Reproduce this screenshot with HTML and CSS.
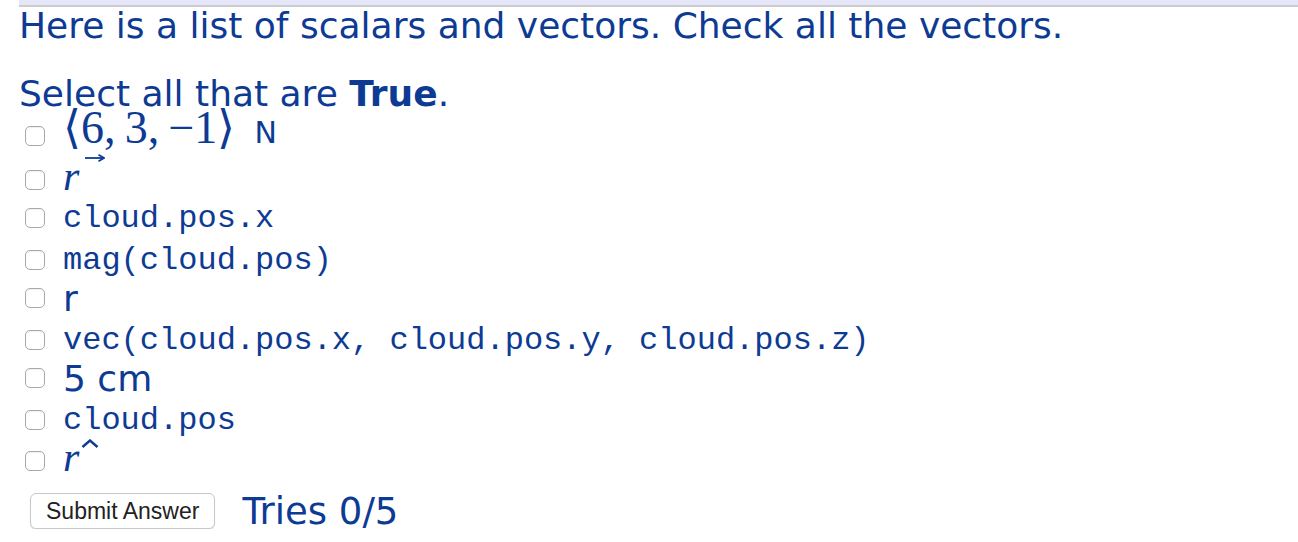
FILE: index.html
```html
<!DOCTYPE html>
<html>
<head>
<meta charset="utf-8">
<link rel="stylesheet" href="styles.css">
</head>
<body>
<div class="topbar"></div>
<div class="content">
  <p class="question">Here is a list of scalars and vectors. Check all the vectors.</p>
  <p class="instr">Select all that are <b>True</b>.</p>
  <ul class="choices">
    <li class="row r-math"><span class="box"></span><span class="label lift-math"><span class="math">⟨6,&#8201;3,&#8201;−1⟩</span><span class="sans-sm">N</span></span></li>
    <li class="row r-vec"><span class="box"></span><span class="label lift-var"><span class="var">r<svg class="arrow" width="20" height="8" viewBox="0 0 20 8"><path d="M0 4H18" stroke="#0d3b93" stroke-width="1.8" fill="none"/><path d="M13.5 0.8L19.2 4L13.5 7.2" stroke="#0d3b93" stroke-width="1.8" fill="none" stroke-linejoin="miter"/></svg></span></span></li>
    <li class="row r-mono"><span class="box"></span><span class="label mono">cloud.pos.x</span></li>
    <li class="row r-mono"><span class="box"></span><span class="label mono">mag(cloud.pos)</span></li>
    <li class="row r-sans"><span class="box"></span><span class="label sans">r</span></li>
    <li class="row r-mono"><span class="box"></span><span class="label mono">vec(cloud.pos.x, cloud.pos.y, cloud.pos.z)</span></li>
    <li class="row r-sans"><span class="box"></span><span class="label sans">5 cm</span></li>
    <li class="row r-mono"><span class="box"></span><span class="label mono">cloud.pos</span></li>
    <li class="row r-vec"><span class="box"></span><span class="label lift-var"><span class="var">r<svg class="hat" width="18" height="9" viewBox="0 0 18 9"><path d="M1.5 8L9 1.5L16.5 8" stroke="#0d3b93" stroke-width="2.4" fill="none"/></svg></span></span></li>
  </ul>
  <div class="actions">
    <button class="submit">Submit Answer</button>
    <span class="tries">Tries 0/5</span>
  </div>
</div>
</body>
</html>
```
FILE: styles.css
```css
body {
  margin: 0;
  background: #fff;
  color: #0d3b93;
  font-family: "DejaVu Sans", Verdana, sans-serif;
}
.topbar {
  margin-left: 19px;
  height: 5px;
  background: #e6e6fa;
  border-bottom: 2px solid #cccccc;
}
.content {
  padding-left: 19px;
}
.question {
  margin: 0;
  font-size: 36px;
  line-height: 38px;
}
.instr {
  margin: 31px 0 0;
  font-size: 36px;
  line-height: 36px;
}
.choices {
  list-style: none;
  margin: 0;
  padding: 0;
}
.row {
  display: flex;
  align-items: center;
  gap: 18px;
  padding-left: 6px;
  box-sizing: border-box;
}
.r-math { height: 48px; }
.r-vec { height: 37px; padding-top: 3px; }
.r-mono { height: 42px; }
.r-sans { height: 38px; padding-bottom: 4px; }
.box {
  flex: none;
  width: 18px;
  height: 18px;
  border: 1px solid #a8a8a8;
  border-radius: 5px;
  background: #fff;
  box-shadow: inset 0 1px 1px rgba(0,0,0,0.06);
}
.lift-math { padding-bottom: 14px; display: flex; align-items: baseline; }
.lift-var { padding-bottom: 8px; }
.math {
  font-family: "Liberation Serif", "Times New Roman", serif;
  font-size: 46px;
  line-height: 34px;
}
.sans-sm {
  font-size: 30px;
  line-height: 30px;
  margin-left: 19px;
}
.var {
  position: relative;
  display: inline-block;
  font-family: "Liberation Serif", "Times New Roman", serif;
  font-style: italic;
  font-size: 42px;
  line-height: 42px;
}
.arrow {
  position: absolute;
  left: 22px;
  top: -1px;
}
.hat {
  position: absolute;
  left: 18px;
  top: 3px;
}
.mono {
  font-family: "Liberation Mono", "Courier New", monospace;
  font-size: 32px;
}
.sans {
  font-size: 36px;
}
.actions {
  display: flex;
  align-items: center;
  gap: 27px;
  margin-top: 15px;
  padding-left: 11px;
}
.submit {
  font-family: "Liberation Sans", Arial, sans-serif;
  font-size: 23px;
  line-height: 27px;
  color: #222;
  background: #fff;
  border: 1px solid #c8c8c8;
  border-radius: 6px;
  padding: 4px 15px 3px;
  box-shadow: 0 1px 1px rgba(0,0,0,0.12);
}
.tries {
  font-size: 37px;
  line-height: 35px;
}
```
